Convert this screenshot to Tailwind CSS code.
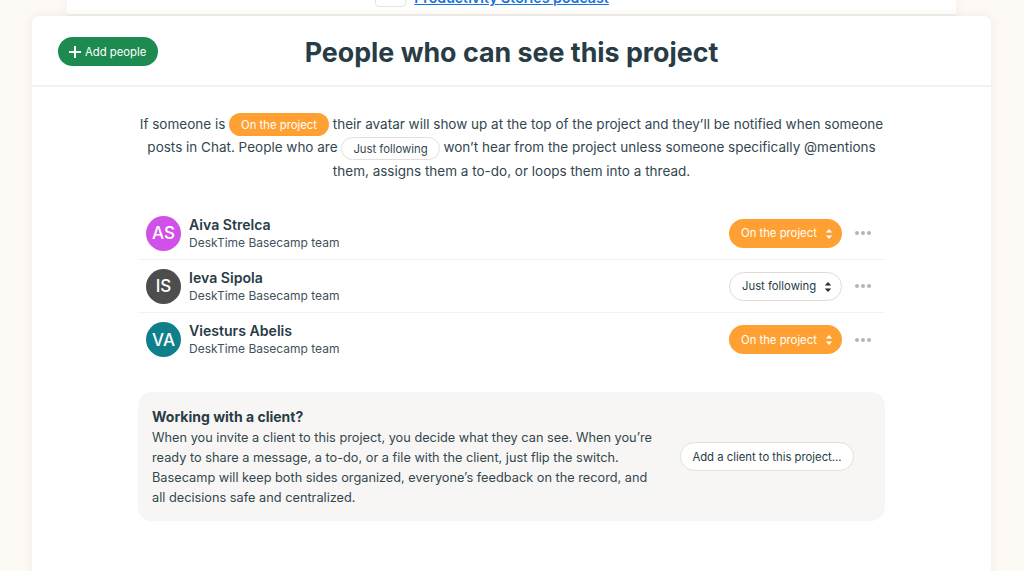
<!DOCTYPE html>
<html lang="en">
<head>
    <meta charset="UTF-8">
    <title>People who can see this project</title>
    <script src="https://cdn.jsdelivr.net/npm/@tailwindcss/browser@4"></script>
</head>
<body class="bg-[#fdf9f5] text-[#283c46] font-['Inter',sans-serif] h-[571px] overflow-hidden">

    <!-- project page behind the sheet -->
    <div class="ml-[67px] mr-[68px] h-[16px] bg-white border-b-2 border-[#f3efea] overflow-hidden flex items-end justify-center gap-[8px] pb-[9px] pr-[39px] shadow-[0_0_12px_rgba(120,90,60,0.06)]">
        <div class="w-[31px] h-[12px] mb-[-2px] bg-white border border-[#e8e5e1] rounded-[4px]"></div>
        <a href="#" class="text-[14.2px] leading-[16px] font-semibold text-[#1a73d8] underline h-[16px] mb-[-1px]">Productivity Stories podcast</a>
    </div>

    <div class="ml-[32px] mr-[33px] h-[555px] bg-white rounded-t-[8px] shadow-[0_0_10px_rgba(120,90,60,0.1)]">
        <header class="relative h-[71px] border-b-2 border-[#f5f0ec] flex items-center justify-center">
            <a href="#" class="absolute left-[26px] top-[21px] h-[29px] w-[100px] rounded-full bg-[#1d8a50] text-white text-[11.3px] font-normal flex items-center pl-[10px] gap-[3px]">
                <svg class="w-[14px] h-[14px]" viewBox="0 0 14 14" fill="none" stroke="white" stroke-width="2"><path d="M7 1v12M1 7h12"/></svg>
                <span class="pt-[1px]">Add people</span>
            </a>
            <h1 class="text-[26.8px] font-bold pt-[3px]">People who can see this project</h1>
        </header>

        <p class="mt-[26px] mx-auto w-[760px] text-center text-[13.5px] leading-[23.4px] text-[#33474f]">
            If someone is <span class="inline-block align-middle h-[23px] leading-[25px] mt-[-1px] px-[12px] rounded-full bg-[#ffa033] text-white text-[11.3px]">On the project</span> their avatar will show up at the top of the project and they’ll be notified when someone posts in Chat. People who are <span class="inline-block align-middle h-[23px] leading-[23px] mt-[-1px] px-[11px] rounded-full bg-white border border-[#e3e0dc] text-[11.3px]">Just following</span> won’t hear from the project unless someone specifically @mentions them, assigns them a to-do, or loops them into a thread.
        </p>

        <ul class="mt-[24px] mx-[106px]">
            <li class="h-[53px] flex items-center pl-[8px] border-b border-[#f5f3f0]">
                <div class="w-[35px] h-[35px] pt-[2px] rounded-full bg-[#d050e8] text-white text-[17px] font-medium flex items-center justify-center">AS</div>
                <div class="ml-[8px] grow">
                    <div class="mt-[1px] text-[14.1px] leading-[16px] font-semibold">Aiva Strelca</div>
                    <div class="mt-[1px] text-[12px] leading-[17px] text-[#3f525b]">DeskTime Basecamp team</div>
                </div>
                <button class="w-[113px] h-[29px] pt-[1px] rounded-full bg-[#ffa033] text-white text-[11.3px] flex items-center justify-between pl-[12px] pr-[9px]">
                    On the project
                    <svg class="w-[8px] h-[10px]" viewBox="0 0 8 10" fill="white"><path d="M4 0l3.2 3.6H.8zM4 10L.8 6.4h6.4z"/></svg>
                </button>
                <div class="ml-[13px] mr-[14px] flex gap-[2px]"><span class="w-[4px] h-[4px] rounded-full bg-[#b5b5b5]"></span><span class="w-[4px] h-[4px] rounded-full bg-[#b5b5b5]"></span><span class="w-[4px] h-[4px] rounded-full bg-[#b5b5b5]"></span></div>
            </li>
            <li class="h-[53px] flex items-center pl-[8px] border-b border-[#f5f3f0]">
                <div class="w-[35px] h-[35px] pt-[2px] rounded-full bg-[#4d4d4d] text-white text-[17px] font-medium flex items-center justify-center">IS</div>
                <div class="ml-[8px] grow">
                    <div class="mt-[1px] text-[14.1px] leading-[16px] font-semibold">Ieva Sipola</div>
                    <div class="mt-[1px] text-[12px] leading-[17px] text-[#3f525b]">DeskTime Basecamp team</div>
                </div>
                <button class="w-[113px] h-[29px] pt-[1px] rounded-full bg-white border border-[#dfdcd8] text-[11.3px] flex items-center justify-between pl-[12px] pr-[9px]">
                    Just following
                    <svg class="w-[8px] h-[10px]" viewBox="0 0 8 10" fill="#1f2d35"><path d="M4 0l3.2 3.6H.8zM4 10L.8 6.4h6.4z"/></svg>
                </button>
                <div class="ml-[13px] mr-[14px] flex gap-[2px]"><span class="w-[4px] h-[4px] rounded-full bg-[#b5b5b5]"></span><span class="w-[4px] h-[4px] rounded-full bg-[#b5b5b5]"></span><span class="w-[4px] h-[4px] rounded-full bg-[#b5b5b5]"></span></div>
            </li>
            <li class="h-[53px] flex items-center pl-[8px]">
                <div class="w-[35px] h-[35px] pt-[2px] rounded-full bg-[#0f7f8c] text-white text-[17px] font-medium flex items-center justify-center">VA</div>
                <div class="ml-[8px] grow">
                    <div class="mt-[1px] text-[14.1px] leading-[16px] font-semibold">Viesturs Abelis</div>
                    <div class="mt-[1px] text-[12px] leading-[17px] text-[#3f525b]">DeskTime Basecamp team</div>
                </div>
                <button class="w-[113px] h-[29px] pt-[1px] rounded-full bg-[#ffa033] text-white text-[11.3px] flex items-center justify-between pl-[12px] pr-[9px]">
                    On the project
                    <svg class="w-[8px] h-[10px]" viewBox="0 0 8 10" fill="white"><path d="M4 0l3.2 3.6H.8zM4 10L.8 6.4h6.4z"/></svg>
                </button>
                <div class="ml-[13px] mr-[14px] flex gap-[2px]"><span class="w-[4px] h-[4px] rounded-full bg-[#b5b5b5]"></span><span class="w-[4px] h-[4px] rounded-full bg-[#b5b5b5]"></span><span class="w-[4px] h-[4px] rounded-full bg-[#b5b5b5]"></span></div>
            </li>
        </ul>

        <section class="mt-[26px] mx-[106px] h-[129px] bg-[#f8f6f4] rounded-[14px] flex items-center pl-[14px]">
            <div class="w-[505px] pt-[2px] text-[12.75px] leading-[20px] text-[#33474f]">
                <h2 class="font-bold text-[#283c46] text-[14px]">Working with a client?</h2>
                <p class="mt-[1px]">When you invite a client to this project, you decide what they can see. When you’re ready to share a message, a to-do, or a file with the client, just flip the switch. Basecamp will keep both sides organized, everyone’s feedback on the record, and all decisions safe and centralized.</p>
            </div>
            <button class="ml-[23px] w-[174px] h-[29px] pt-[1px] rounded-full bg-white border border-[#e3e0dc] text-[11.3px]">Add a client to this project…</button>
        </section>
    </div>
</body>
</html>
